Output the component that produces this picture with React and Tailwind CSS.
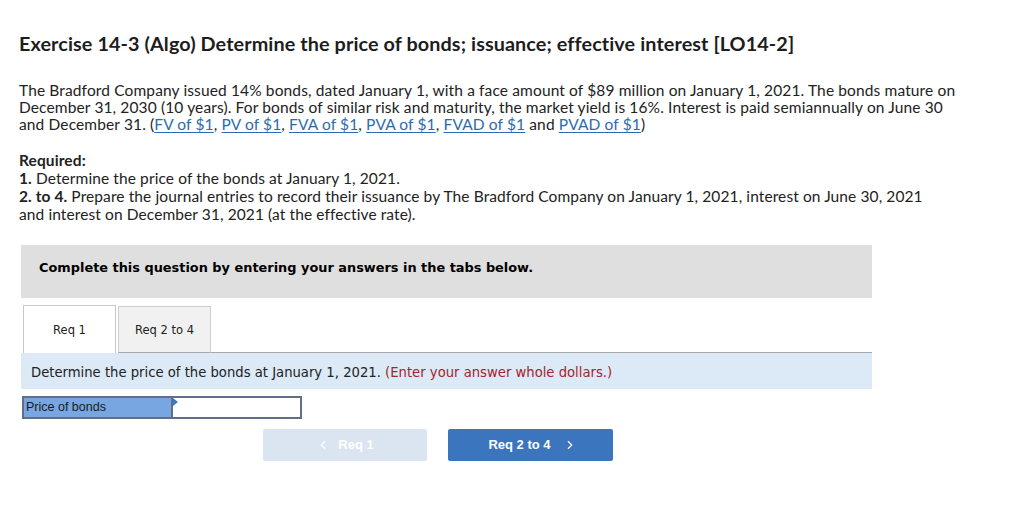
import React from 'react';
import { ChevronLeft, ChevronRight } from 'lucide-react';

const links = ['FV of $1', 'PV of $1', 'FVA of $1', 'PVA of $1', 'FVAD of $1'];

const TableLink = ({ children }) => (
  <a href="#" className="text-[#2a6cb0] underline underline-offset-2 decoration-1">
    {children}
  </a>
);

export default function App() {
  return (
    <div className="w-[1024px] h-[524px] bg-white text-[#222] overflow-hidden">
      <div className="pl-[19px] pt-[31px]">
        {/* --- Header --- */}
        <h1 className="font-['Lato',sans-serif] font-bold text-[19.8px] leading-[24px] text-[#1d1d1d] tracking-[0.1px]">
          Exercise 14-3 (Algo) Determine the price of bonds; issuance; effective interest [LO14-2]
        </h1>

        {/* --- Problem text --- */}
        <p className="mt-[27px] font-['Lato',sans-serif] text-[15.5px] leading-[17px] tracking-[0.13px] text-[#222] whitespace-nowrap">
          The Bradford Company issued 14% bonds, dated January 1, with a face amount of $89 million on January 1, 2021. The bonds mature on
          <br />
          December 31, 2030 (10 years). For bonds of similar risk and maturity, the market yield is 16%. Interest is paid semiannually on June 30
          <br />
          and December 31. (
          {links.map((l, i) => (
            <React.Fragment key={l}>
              <TableLink>{l}</TableLink>
              {i < links.length - 1 ? ', ' : ''}
            </React.Fragment>
          ))}{' '}
          and <TableLink>PVAD of $1</TableLink>)
        </p>

        <div className="mt-[18px] font-['Lato',sans-serif] text-[15.5px] leading-[18px] tracking-[0.1px] text-[#222] whitespace-nowrap">
          <div className="font-bold">Required:</div>
          <div>
            <span className="font-bold">1.</span> Determine the price of the bonds at January 1, 2021.
          </div>
          <div>
            <span className="font-bold">2. to 4.</span> Prepare the journal entries to record their issuance by The Bradford Company on January 1, 2021, interest on June 30, 2021
          </div>
          <div>and interest on December 31, 2021 (at the effective rate).</div>
        </div>
      </div>

      {/* --- Question panel --- */}
      <div className="ml-[21px] w-[851px] mt-[22px]">
        <div className="h-[53px] bg-[#dfdfdf] flex items-center pl-[18px] pb-[7px]">
          <span className="font-['DejaVu_Sans',sans-serif] font-bold text-[12.9px] text-black">
            Complete this question by entering your answers in the tabs below.
          </span>
        </div>

        {/* Tabs */}
        <div className="mt-[7px] flex items-end h-[48px]">
          <div className="ml-[2px] w-[93px] h-[48px] pt-[3px] bg-white border border-b-0 border-[#c8c8c8] flex items-center justify-center font-['DejaVu_Sans',sans-serif] text-[11.5px] text-[#222]">
            Req 1
          </div>
          <div className="ml-[2px] w-[93px] h-[47px] pt-[3px] bg-[#f1f1f1] border border-[#cfcfcf] border-b-[#a9a9a9] flex items-center justify-center font-['DejaVu_Sans',sans-serif] text-[11.5px] text-[#222]">
            Req 2 to 4
          </div>
          <div className="flex-1 border-b border-[#a9a9a9]" />
        </div>

        <div className="h-[36px] pt-[3px] bg-[#dce9f7] flex items-center pl-[10px] font-['DejaVu_Sans',sans-serif] text-[13.2px] text-[#222]">
          Determine the price of the bonds at January 1, 2021.&nbsp;
          <span className="text-[#a3242b]">(Enter your answer whole dollars.)</span>
        </div>

        {/* Answer row */}
        <div className="mt-[7px] ml-[1px] flex w-[280px] h-[23px] border-2 border-[#5f6f8a]">
          <div className="w-[147px] bg-[#77a6e0] flex items-center pl-[2px] font-['Liberation_Sans',sans-serif] text-[12.5px] text-[#1b1b1b]">
            Price of bonds
          </div>
          <div className="relative flex-1 bg-white border-l-2 border-[#5f6f8a]">
            <div className="absolute left-0 top-0 w-0 h-0 border-t-[4px] border-b-[4px] border-l-[5px] border-t-transparent border-b-transparent border-l-[#3c78c4]" />
          </div>
        </div>

        {/* Nav buttons */}
        <div className="mt-[10px] flex gap-[21px] pl-[242px]">
          <button className="w-[164px] h-[32px] rounded-[2px] bg-[#dbe5f1] flex items-center justify-center gap-[8px] font-['Liberation_Sans',sans-serif] font-bold text-[13px] text-white">
            <ChevronLeft className="w-[14px] h-[14px]" strokeWidth={2} />
            Req 1
          </button>
          <button className="w-[165px] h-[32px] rounded-[2px] bg-[#3a75bd] flex items-center justify-center gap-[12px] pl-[4px] font-['Liberation_Sans',sans-serif] font-bold text-[13px] text-white">
            Req 2 to 4
            <ChevronRight className="w-[14px] h-[14px]" strokeWidth={2} />
          </button>
        </div>
      </div>
    </div>
  );
}
